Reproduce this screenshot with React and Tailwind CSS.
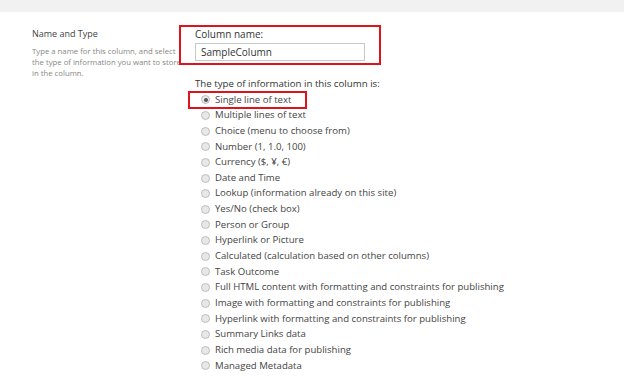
import React from "react";

const options = [
  "Single line of text",
  "Multiple lines of text",
  "Choice (menu to choose from)",
  "Number (1, 1.0, 100)",
  "Currency ($, ¥, €)",
  "Date and Time",
  "Lookup (information already on this site)",
  "Yes/No (check box)",
  "Person or Group",
  "Hyperlink or Picture",
  "Calculated (calculation based on other columns)",
  "Task Outcome",
  "Full HTML content with formatting and constraints for publishing",
  "Image with formatting and constraints for publishing",
  "Hyperlink with formatting and constraints for publishing",
  "Summary Links data",
  "Rich media data for publishing",
  "Managed Metadata",
];

function Radio({ checked }) {
  return (
    <span className="w-[9px] h-[9px] rounded-full border border-[#bdbdbd] bg-[#e8e8e8] flex items-center justify-center shrink-0">
      {checked && <span className="w-[4px] h-[4px] rounded-full bg-[#555]" />}
    </span>
  );
}

export default function App() {
  return (
    <div
      className="w-[624px] h-[391px] bg-white overflow-hidden text-[#444]"
      style={{ fontFamily: "'Open Sans', 'Noto Sans', sans-serif" }}
    >
      <div className="h-[12px] bg-[#f1f1f1]" />
      <div className="flex pl-[32px] pt-[13px]">
        <div className="w-[147px] shrink-0 overflow-hidden">
          <div className="text-[9px] leading-[12px] text-[#444] pt-[3px]">Name and Type</div>
          <div className="mt-[6px] text-[7.75px] leading-[11px] text-[#888] whitespace-nowrap">
            <div>Type a name for this column, and select</div>
            <div>the type of information you want to store</div>
            <div>in the column.</div>
          </div>
        </div>
        <div className="flex flex-col">
          <div className="w-[202px] h-[40px] border-2 border-[#e0121b] pl-[14px] pt-[1px]">
            <div className="text-[10px] leading-[13px] text-[#333]">Column name:</div>
            <div className="mt-[2px] w-[170px] h-[18px] border border-[#c8c8c8] flex items-center pl-[5px] text-[10px] text-[#333]">
              SampleColumn
            </div>
          </div>
          <div className="pl-[16px] mt-[12px] text-[9.7px] leading-[13px] text-[#333]">
            The type of information in this column is:
          </div>
          <div className="relative pl-[22px] mt-[2px] flex flex-col">
            <div className="absolute left-[9px] top-[-1px] w-[119px] h-[18px] border-2 border-[#e0121b]" />
            {options.map((o, i) => (
              <div key={o} className="h-[15.65px] flex items-center gap-[5px] text-[9.6px] text-[#444] whitespace-nowrap">
                <Radio checked={i === 0} />
                <span>{o}</span>
              </div>
            ))}
          </div>
        </div>
      </div>
    </div>
  );
}
